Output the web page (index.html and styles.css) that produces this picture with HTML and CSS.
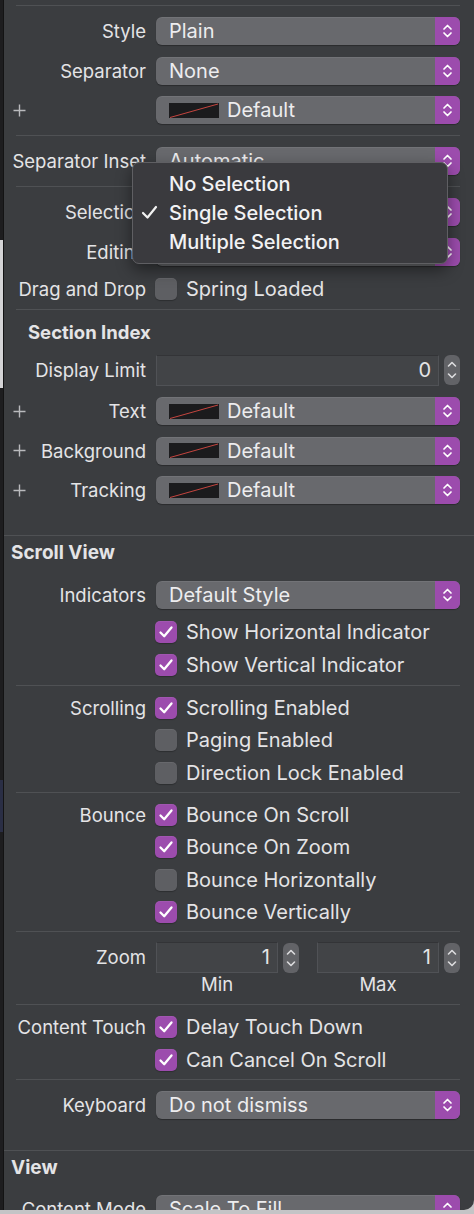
FILE: index.html
```html
<!DOCTYPE html>
<html lang="en">
<head>
    <meta charset="UTF-8">
    <meta name="viewport" content="width=device-width, initial-scale=1.0">
    <title>Table View Inspector</title>
    <link rel="stylesheet" href="styles.css">
</head>
<body>
    <div class="window">
        <div class="edge"></div>
        <div class="panel">
            <div class="rule"></div>

            <div class="group">
                <div class="row">
                    <span class="label">Style</span>
                    <div class="popup">
                        <span class="popup-value">Plain</span>
                        <span class="popup-arrows"><svg width="11" height="18" viewBox="0 0 11 18"><path d="M2 7 L5.5 3.5 L9 7 M2 11 L5.5 14.5 L9 11" fill="none" stroke="#fff" stroke-width="1.7" stroke-linecap="round" stroke-linejoin="round"/></svg></span>
                    </div>
                </div>
                <div class="row">
                    <span class="label">Separator</span>
                    <div class="popup">
                        <span class="popup-value">None</span>
                        <span class="popup-arrows"><svg width="11" height="18" viewBox="0 0 11 18"><path d="M2 7 L5.5 3.5 L9 7 M2 11 L5.5 14.5 L9 11" fill="none" stroke="#fff" stroke-width="1.7" stroke-linecap="round" stroke-linejoin="round"/></svg></span>
                    </div>
                </div>
                <div class="row">
                    <span class="label add"><svg class="plus" width="13" height="13" viewBox="0 0 13 13"><path d="M6.5 0.5 V12.5 M0.5 6.5 H12.5" stroke="#b9babd" stroke-width="1.4"/></svg></span>
                    <div class="popup">
                        <span class="popup-value"><svg class="swatch" width="50" height="15" viewBox="0 0 50 15"><rect width="50" height="15" fill="#1b1b1d"/><line x1="1" y1="14.5" x2="49" y2="1" stroke="#c4453f" stroke-width="1"/></svg>Default</span>
                        <span class="popup-arrows"><svg width="11" height="18" viewBox="0 0 11 18"><path d="M2 7 L5.5 3.5 L9 7 M2 11 L5.5 14.5 L9 11" fill="none" stroke="#fff" stroke-width="1.7" stroke-linecap="round" stroke-linejoin="round"/></svg></span>
                    </div>
                </div>
            </div>

            <div class="rule"></div>

            <div class="group">
                <div class="row">
                    <span class="label">Separator Inset</span>
                    <div class="popup">
                        <span class="popup-value">Automatic</span>
                        <span class="popup-arrows"><svg width="11" height="18" viewBox="0 0 11 18"><path d="M2 7 L5.5 3.5 L9 7 M2 11 L5.5 14.5 L9 11" fill="none" stroke="#fff" stroke-width="1.7" stroke-linecap="round" stroke-linejoin="round"/></svg></span>
                    </div>
                </div>
            </div>

            <div class="rule"></div>

            <div class="group">
                <div class="row">
                    <span class="label">Selection</span>
                    <div class="popup">
                        <span class="popup-value">Single Selection</span>
                        <span class="popup-arrows"><svg width="11" height="18" viewBox="0 0 11 18"><path d="M2 7 L5.5 3.5 L9 7 M2 11 L5.5 14.5 L9 11" fill="none" stroke="#fff" stroke-width="1.7" stroke-linecap="round" stroke-linejoin="round"/></svg></span>
                    </div>
                </div>
                <div class="row">
                    <span class="label">Editing</span>
                    <div class="popup">
                        <span class="popup-value">No Selection During Editing</span>
                        <span class="popup-arrows"><svg width="11" height="18" viewBox="0 0 11 18"><path d="M2 7 L5.5 3.5 L9 7 M2 11 L5.5 14.5 L9 11" fill="none" stroke="#fff" stroke-width="1.7" stroke-linecap="round" stroke-linejoin="round"/></svg></span>
                    </div>
                </div>
                <div class="check-row">
                    <span class="label">Drag and Drop</span>
                    <span class="check"><span class="box"></span>Spring Loaded</span>
                </div>
            </div>

            <div class="rule"></div>

            <div class="group tail">
                <div class="subtitle">Section Index</div>
                <div class="row">
                    <span class="label">Display Limit</span>
                    <div class="field">
                        <span class="field-input">0</span>
                        <span class="stepper"><svg width="16" height="30" viewBox="0 0 16 30"><path d="M4.5 11 L8 7.5 L11.5 11 M4.5 19 L8 22.5 L11.5 19" fill="none" stroke="#dcdcde" stroke-width="1.6" stroke-linecap="round" stroke-linejoin="round"/></svg></span>
                    </div>
                </div>
                <div class="row">
                    <span class="label add"><svg class="plus" width="13" height="13" viewBox="0 0 13 13"><path d="M6.5 0.5 V12.5 M0.5 6.5 H12.5" stroke="#b9babd" stroke-width="1.4"/></svg>Text</span>
                    <div class="popup">
                        <span class="popup-value"><svg class="swatch" width="50" height="15" viewBox="0 0 50 15"><rect width="50" height="15" fill="#1b1b1d"/><line x1="1" y1="14.5" x2="49" y2="1" stroke="#c4453f" stroke-width="1"/></svg>Default</span>
                        <span class="popup-arrows"><svg width="11" height="18" viewBox="0 0 11 18"><path d="M2 7 L5.5 3.5 L9 7 M2 11 L5.5 14.5 L9 11" fill="none" stroke="#fff" stroke-width="1.7" stroke-linecap="round" stroke-linejoin="round"/></svg></span>
                    </div>
                </div>
                <div class="row">
                    <span class="label add"><svg class="plus" width="13" height="13" viewBox="0 0 13 13"><path d="M6.5 0.5 V12.5 M0.5 6.5 H12.5" stroke="#b9babd" stroke-width="1.4"/></svg>Background</span>
                    <div class="popup">
                        <span class="popup-value"><svg class="swatch" width="50" height="15" viewBox="0 0 50 15"><rect width="50" height="15" fill="#1b1b1d"/><line x1="1" y1="14.5" x2="49" y2="1" stroke="#c4453f" stroke-width="1"/></svg>Default</span>
                        <span class="popup-arrows"><svg width="11" height="18" viewBox="0 0 11 18"><path d="M2 7 L5.5 3.5 L9 7 M2 11 L5.5 14.5 L9 11" fill="none" stroke="#fff" stroke-width="1.7" stroke-linecap="round" stroke-linejoin="round"/></svg></span>
                    </div>
                </div>
                <div class="row">
                    <span class="label add"><svg class="plus" width="13" height="13" viewBox="0 0 13 13"><path d="M6.5 0.5 V12.5 M0.5 6.5 H12.5" stroke="#b9babd" stroke-width="1.4"/></svg>Tracking</span>
                    <div class="popup">
                        <span class="popup-value"><svg class="swatch" width="50" height="15" viewBox="0 0 50 15"><rect width="50" height="15" fill="#1b1b1d"/><line x1="1" y1="14.5" x2="49" y2="1" stroke="#c4453f" stroke-width="1"/></svg>Default</span>
                        <span class="popup-arrows"><svg width="11" height="18" viewBox="0 0 11 18"><path d="M2 7 L5.5 3.5 L9 7 M2 11 L5.5 14.5 L9 11" fill="none" stroke="#fff" stroke-width="1.7" stroke-linecap="round" stroke-linejoin="round"/></svg></span>
                    </div>
                </div>
            </div>

            <div class="rule full"></div>

            <div class="group section">
                <div class="section-title">Scroll View</div>
                <div class="row">
                    <span class="label">Indicators</span>
                    <div class="popup">
                        <span class="popup-value">Default Style</span>
                        <span class="popup-arrows"><svg width="11" height="18" viewBox="0 0 11 18"><path d="M2 7 L5.5 3.5 L9 7 M2 11 L5.5 14.5 L9 11" fill="none" stroke="#fff" stroke-width="1.7" stroke-linecap="round" stroke-linejoin="round"/></svg></span>
                    </div>
                </div>
                <div class="check-row">
                    <span class="label"></span>
                    <span class="check"><span class="box on"><svg width="22" height="22" viewBox="0 0 22 22"><path d="M5.5 11.5 L9.2 15.2 L16.5 6.5" fill="none" stroke="#fff" stroke-width="2.3" stroke-linecap="round" stroke-linejoin="round"/></svg></span>Show Horizontal Indicator</span>
                </div>
                <div class="check-row">
                    <span class="label"></span>
                    <span class="check"><span class="box on"><svg width="22" height="22" viewBox="0 0 22 22"><path d="M5.5 11.5 L9.2 15.2 L16.5 6.5" fill="none" stroke="#fff" stroke-width="2.3" stroke-linecap="round" stroke-linejoin="round"/></svg></span>Show Vertical Indicator</span>
                </div>
            </div>

            <div class="rule"></div>

            <div class="group checks">
                <div class="check-row">
                    <span class="label">Scrolling</span>
                    <span class="check"><span class="box on"><svg width="22" height="22" viewBox="0 0 22 22"><path d="M5.5 11.5 L9.2 15.2 L16.5 6.5" fill="none" stroke="#fff" stroke-width="2.3" stroke-linecap="round" stroke-linejoin="round"/></svg></span>Scrolling Enabled</span>
                </div>
                <div class="check-row">
                    <span class="label"></span>
                    <span class="check"><span class="box"></span>Paging Enabled</span>
                </div>
                <div class="check-row">
                    <span class="label"></span>
                    <span class="check"><span class="box"></span>Direction Lock Enabled</span>
                </div>
            </div>

            <div class="rule"></div>

            <div class="group checks">
                <div class="check-row">
                    <span class="label">Bounce</span>
                    <span class="check"><span class="box on"><svg width="22" height="22" viewBox="0 0 22 22"><path d="M5.5 11.5 L9.2 15.2 L16.5 6.5" fill="none" stroke="#fff" stroke-width="2.3" stroke-linecap="round" stroke-linejoin="round"/></svg></span>Bounce On Scroll</span>
                </div>
                <div class="check-row">
                    <span class="label"></span>
                    <span class="check"><span class="box on"><svg width="22" height="22" viewBox="0 0 22 22"><path d="M5.5 11.5 L9.2 15.2 L16.5 6.5" fill="none" stroke="#fff" stroke-width="2.3" stroke-linecap="round" stroke-linejoin="round"/></svg></span>Bounce On Zoom</span>
                </div>
                <div class="check-row">
                    <span class="label"></span>
                    <span class="check"><span class="box"></span>Bounce Horizontally</span>
                </div>
                <div class="check-row">
                    <span class="label"></span>
                    <span class="check"><span class="box on"><svg width="22" height="22" viewBox="0 0 22 22"><path d="M5.5 11.5 L9.2 15.2 L16.5 6.5" fill="none" stroke="#fff" stroke-width="2.3" stroke-linecap="round" stroke-linejoin="round"/></svg></span>Bounce Vertically</span>
                </div>
            </div>

            <div class="rule"></div>

            <div class="group zoom">
                <div class="row top">
                    <span class="label zoom-label">Zoom</span>
                    <div class="pair">
                        <div>
                            <div class="field">
                                <span class="field-input">1</span>
                                <span class="stepper"><svg width="16" height="30" viewBox="0 0 16 30"><path d="M4.5 11 L8 7.5 L11.5 11 M4.5 19 L8 22.5 L11.5 19" fill="none" stroke="#dcdcde" stroke-width="1.6" stroke-linecap="round" stroke-linejoin="round"/></svg></span>
                            </div>
                            <div class="caption">Min</div>
                        </div>
                        <div>
                            <div class="field">
                                <span class="field-input">1</span>
                                <span class="stepper"><svg width="16" height="30" viewBox="0 0 16 30"><path d="M4.5 11 L8 7.5 L11.5 11 M4.5 19 L8 22.5 L11.5 19" fill="none" stroke="#dcdcde" stroke-width="1.6" stroke-linecap="round" stroke-linejoin="round"/></svg></span>
                            </div>
                            <div class="caption">Max</div>
                        </div>
                    </div>
                </div>
            </div>

            <div class="rule"></div>

            <div class="group checks">
                <div class="check-row">
                    <span class="label">Content Touch</span>
                    <span class="check"><span class="box on"><svg width="22" height="22" viewBox="0 0 22 22"><path d="M5.5 11.5 L9.2 15.2 L16.5 6.5" fill="none" stroke="#fff" stroke-width="2.3" stroke-linecap="round" stroke-linejoin="round"/></svg></span>Delay Touch Down</span>
                </div>
                <div class="check-row">
                    <span class="label"></span>
                    <span class="check"><span class="box on"><svg width="22" height="22" viewBox="0 0 22 22"><path d="M5.5 11.5 L9.2 15.2 L16.5 6.5" fill="none" stroke="#fff" stroke-width="2.3" stroke-linecap="round" stroke-linejoin="round"/></svg></span>Can Cancel On Scroll</span>
                </div>
            </div>

            <div class="rule"></div>

            <div class="group tail">
                <div class="row">
                    <span class="label">Keyboard</span>
                    <div class="popup">
                        <span class="popup-value">Do not dismiss</span>
                        <span class="popup-arrows"><svg width="11" height="18" viewBox="0 0 11 18"><path d="M2 7 L5.5 3.5 L9 7 M2 11 L5.5 14.5 L9 11" fill="none" stroke="#fff" stroke-width="1.7" stroke-linecap="round" stroke-linejoin="round"/></svg></span>
                    </div>
                </div>
            </div>

            <div class="rule full"></div>

            <div class="group section">
                <div class="section-title">View</div>
                <div class="row">
                    <span class="label">Content Mode</span>
                    <div class="popup">
                        <span class="popup-value">Scale To Fill</span>
                        <span class="popup-arrows"><svg width="11" height="18" viewBox="0 0 11 18"><path d="M2 7 L5.5 3.5 L9 7 M2 11 L5.5 14.5 L9 11" fill="none" stroke="#fff" stroke-width="1.7" stroke-linecap="round" stroke-linejoin="round"/></svg></span>
                    </div>
                </div>
            </div>
        </div>

        <!-- open Selection menu -->
        <div class="menu">
            <div class="menu-item">No Selection</div>
            <div class="menu-item"><svg class="menu-check" width="17" height="15" viewBox="0 0 17 15"><path d="M2 8 L6.5 12.5 L15 2" fill="none" stroke="#f2f2f2" stroke-width="2.2" stroke-linecap="round" stroke-linejoin="round"/></svg>Single Selection</div>
            <div class="menu-item">Multiple Selection</div>
        </div>
    </div>
</body>
</html>
```

FILE: styles.css
```css
:root {
    --panel: #3b3d40;
    --rule: #4f5154;
    --text: #e4e4e6;
    --popup: #68696d;
    --purple: #9c4cad;
    --box: #5e5f63;
}

* {
    box-sizing: border-box;
}

body {
    margin: 0;
    background: #c4c4c6;
    font-family: Inter, "Noto Sans", sans-serif;
    font-size: 18.5px;
    color: var(--text);
}

.window {
    position: relative;
    display: flex;
    height: 1210px;
    overflow: hidden;
    background: var(--panel);
    border-bottom-right-radius: 10px;
}

.edge {
    width: 4px;
    flex: none;
    border-right: 1px solid #131314;
    background: linear-gradient(to bottom,
        #1d1d1f 0, #1d1d1f 240px,
        #d4d4d6 240px, #d4d4d6 388px,
        #1d1d1f 388px, #1d1d1f 780px,
        #2a2e45 780px, #2a2e45 832px,
        #1d1d1f 832px);
}

.panel {
    flex: 1;
    padding: 5px 14px 0 0;
}

.rule {
    height: 1px;
    margin-left: 12px;
    background: var(--rule);
}

.rule.full {
    margin-left: 0;
    margin-right: -14px;
}

.group {
    display: flex;
    flex-direction: column;
    gap: 11.5px;
    padding: 11px 0;
}

.group.checks {
    padding: 10px 0;
}

.group.zoom {
    padding: 10px 0;
}

.group.tail {
    padding-bottom: 31px;
}

.group.section {
    padding-top: 6px;
}

.section-title {
    padding-left: 7px;
    height: 22px;
    line-height: 22px;
    font-size: 19px;
    font-weight: 700;
    margin-bottom: 5px;
}

.subtitle {
    padding-left: 24px;
    height: 22px;
    line-height: 22px;
    font-weight: 700;
}

.row,
.check-row {
    display: grid;
    grid-template-columns: 142px 1fr;
    column-gap: 10px;
    align-items: center;
}

.row.top {
    align-items: start;
}

.check-row {
    height: 21px;
    column-gap: 9px;
}

.label {
    text-align: right;
    white-space: nowrap;
}

.label.add {
    display: flex;
    justify-content: space-between;
    align-items: center;
    padding-left: 9px;
}

.zoom-label {
    line-height: 31px;
}

/* popup buttons */
.popup {
    display: flex;
    align-items: center;
    height: 28px;
    border-radius: 6px;
    overflow: hidden;
    background: var(--popup);
    box-shadow: 0 1px 1px rgba(0, 0, 0, 0.3), inset 0 1px 0 rgba(255, 255, 255, 0.07);
}

.popup-value {
    flex: 1;
    display: flex;
    align-items: center;
    gap: 8px;
    padding-left: 13px;
    white-space: nowrap;
    overflow: hidden;
    font-size: 20px;
    color: #ededef;
}

.popup-arrows {
    width: 25px;
    align-self: stretch;
    display: flex;
    align-items: center;
    justify-content: center;
    background: var(--purple);
}

.swatch {
    flex: none;
}

/* checkboxes */
.check {
    display: flex;
    align-items: center;
    gap: 9px;
    white-space: nowrap;
    font-size: 20px;
}

.box {
    width: 22px;
    height: 22px;
    flex: none;
    border-radius: 5px;
    background: var(--box);
    box-shadow: inset 0 1px 0 rgba(255, 255, 255, 0.06), 0 1px 1px rgba(0, 0, 0, 0.25);
}

.box.on {
    background: var(--purple);
}

.box svg {
    display: block;
}

/* number fields */
.field {
    display: flex;
    align-items: center;
    gap: 5px;
}

.field-input {
    flex: 1;
    height: 31px;
    line-height: 29px;
    padding-right: 7px;
    text-align: right;
    font-size: 20px;
    background: #424447;
    border: 1px solid #505256;
    border-top-color: #333437;
}

.stepper {
    width: 16px;
    height: 30px;
    flex: none;
    border-radius: 6px;
    background: #626367;
}

.stepper svg {
    display: block;
}

.pair {
    display: grid;
    grid-template-columns: 1fr 1fr;
    column-gap: 18px;
}

.caption {
    padding-right: 21px;
    text-align: center;
    line-height: 20px;
    margin-top: 1px;
}

/* open menu */
.menu {
    position: absolute;
    z-index: 2;
    left: 132px;
    top: 162px;
    width: 316px;
    padding: 6px 0 7px;
    background: #3a3a3e;
    border: 1px solid #5f5f63;
    border-radius: 7px;
    box-shadow: 0 6px 16px rgba(0, 0, 0, 0.45);
}

.menu-item {
    position: relative;
    height: 29px;
    display: flex;
    align-items: center;
    padding-left: 36px;
    font-size: 20px;
    font-weight: 500;
    color: #f2f2f4;
}

.menu-check {
    position: absolute;
    left: 8px;
    top: 7px;
}
```
